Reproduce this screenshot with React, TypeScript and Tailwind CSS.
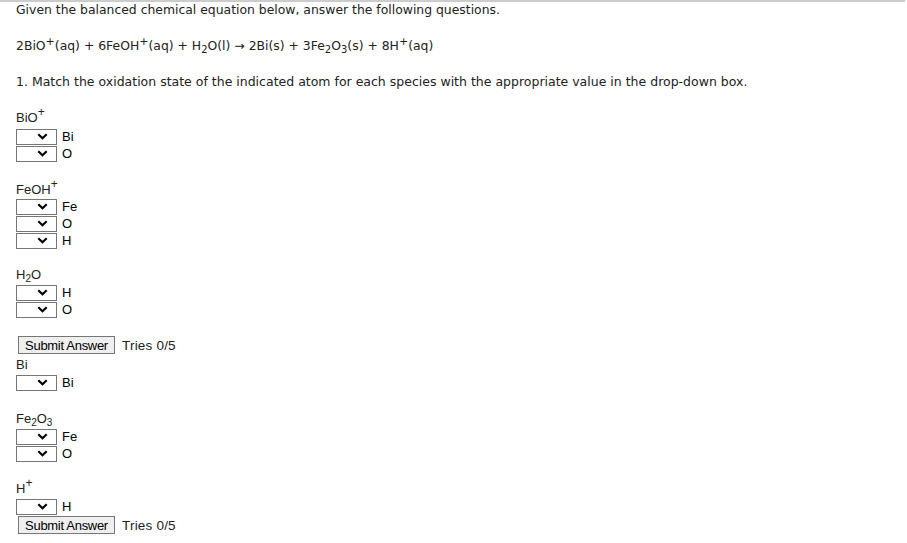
import React from "react";

const V = "font-['DejaVu_Sans',Verdana,sans-serif]";
const A = "font-['Liberation_Sans',Arial,sans-serif]";

function Sel({ label }: { label: string }) {
  return (
    <div className="flex items-center h-[17px]">
      <div className="w-[41px] h-[16px] border border-[#767676] bg-white flex items-center justify-end pr-[8px] box-border">
        <svg width="11" height="7" viewBox="0 0 11 7">
          <path d="M1.3 1.3 L5.5 5.2 L9.7 1.3" stroke="#000" strokeWidth="2.2" fill="none" />
        </svg>
      </div>
      <span className={`ml-[5px] text-[13px] leading-none text-black ${A}`}>{label}</span>
    </div>
  );
}

function Sup({ children }: { children: React.ReactNode }) {
  return <sup className="text-[11px] leading-none">{children}</sup>;
}
function LSup({ children }: { children: React.ReactNode }) {
  return <sup className="text-[12px] leading-none">{children}</sup>;
}
function Sub({ children }: { children: React.ReactNode }) {
  return <sub className="text-[10px] leading-none">{children}</sub>;
}

function Label({ children, mt }: { children: React.ReactNode; mt: string }) {
  return <div className={`${mt} h-[16px] leading-[16px] text-[13px] text-[#222] ${A}`}>{children}</div>;
}

function Submit() {
  return (
    <div className="flex items-center h-[18px]">
      <button className={`ml-[2px] h-[18px] w-[97px] border border-[#767676] bg-[#efefef] text-[13px] leading-none tracking-[-0.3px] text-black ${A}`}>
        Submit Answer
      </button>
      <span className={`ml-[7px] mt-[2px] text-[13.5px] tracking-[0.2px] text-[#222] ${A}`}>Tries 0/5</span>
    </div>
  );
}

export default function App() {
  return (
    <div className="w-[907px] h-[543px] bg-white overflow-hidden">
      <div className="h-[2px] w-[905px] bg-[#cccccc]" />
      <div className="pl-[16px]">
        <div className={`h-[16px] leading-[16px] text-[12.4px] text-[#222] ${V}`}>
          Given the balanced chemical equation below, answer the following questions.
        </div>
        <div className={`mt-[20px] h-[16px] leading-[16px] text-[12.4px] text-[#222] ${V}`}>
          2BiO<Sup>+</Sup>(aq) + 6FeOH<Sup>+</Sup>(aq) + H<Sub>2</Sub>O(l) → 2Bi(s) + 3Fe<Sub>2</Sub>O<Sub>3</Sub>(s) + 8H<Sup>+</Sup>(aq)
        </div>
        <div className={`mt-[20px] h-[16px] leading-[16px] text-[12.5px] text-[#222] ${V}`}>
          1. Match the oxidation state of the indicated atom for each species with the appropriate value in the drop-down box.
        </div>

        <Label mt="mt-[20px]">BiO<LSup>+</LSup></Label>
        <div className="mt-[2px]">
          <Sel label="Bi" />
          <Sel label="O" />
        </div>

        <Label mt="mt-[20px]">FeOH<LSup>+</LSup></Label>
        <div className="mt-[0px]">
          <Sel label="Fe" />
          <Sel label="O" />
          <Sel label="H" />
        </div>

        <Label mt="mt-[18px]">H<Sub>2</Sub>O</Label>
        <div className="mt-[1px]">
          <Sel label="H" />
          <Sel label="O" />
        </div>

        <div className="mt-[18px]">
          <Submit />
        </div>
        <Label mt="mt-[3px]">Bi</Label>
        <div className="mt-[1px]">
          <Sel label="Bi" />
        </div>

        <Label mt="mt-[20px]">Fe<Sub>2</Sub>O<Sub>3</Sub></Label>
        <div className="mt-[1px]">
          <Sel label="Fe" />
          <Sel label="O" />
        </div>

        <Label mt="mt-[19px]">H<LSup>+</LSup></Label>
        <div className="mt-[1px]">
          <Sel label="H" />
        </div>
        <div className="mt-[1px]">
          <Submit />
        </div>
      </div>
    </div>
  );
}
